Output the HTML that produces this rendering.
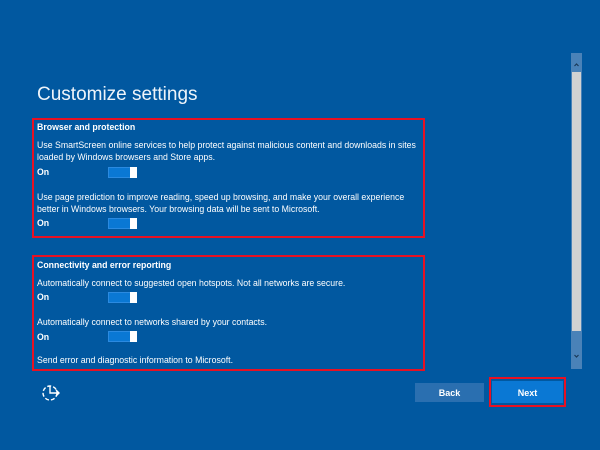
<!DOCTYPE html>
<html><head><style>
body{margin:0;width:600px;height:450px;background:#0158a0;font-family:"Liberation Sans",sans-serif;color:#fff;position:relative;overflow:hidden}
.a{position:absolute;white-space:nowrap;font-size:8.75px;line-height:11px}
.b{font-weight:bold}
.box{position:absolute;border:2px solid #e81123;box-sizing:border-box}
.tg{position:absolute;width:29px;height:11px;background:#0a78d4;border:1px solid #2b8ae0;box-sizing:border-box}
.tg::after{content:"";position:absolute;right:-1px;top:-1px;width:7px;height:11px;background:#fff}
</style></head><body>
<div class="a" style="left:37px;top:83px;font-size:19px;line-height:24px;color:#eef4fa">Customize settings</div>
<div class="box" style="left:32px;top:118px;width:393px;height:120px"></div>
<div class="a b" style="left:37px;top:122px">Browser and protection</div>
<div class="a" style="left:37px;top:140px">Use SmartScreen online services to help protect against malicious content and downloads in sites</div>
<div class="a" style="left:37px;top:152px">loaded by Windows browsers and Store apps.</div>
<div class="a b" style="left:37px;top:167px">On</div><div class="tg" style="left:108px;top:167px"></div>
<div class="a" style="left:37px;top:192px">Use page prediction to improve reading, speed up browsing, and make your overall experience</div>
<div class="a" style="left:37px;top:204px">better in Windows browsers. Your browsing data will be sent to Microsoft.</div>
<div class="a b" style="left:37px;top:218px">On</div><div class="tg" style="left:108px;top:218px"></div>
<div class="box" style="left:32px;top:255px;width:393px;height:116px"></div>
<div class="a b" style="left:37px;top:260px">Connectivity and error reporting</div>
<div class="a" style="left:37px;top:278px">Automatically connect to suggested open hotspots. Not all networks are secure.</div>
<div class="a b" style="left:37px;top:292px">On</div><div class="tg" style="left:108px;top:292px"></div>
<div class="a" style="left:37px;top:317px">Automatically connect to networks shared by your contacts.</div>
<div class="a b" style="left:37px;top:332px">On</div><div class="tg" style="left:108px;top:331px"></div>
<div class="a" style="left:37px;top:355px">Send error and diagnostic information to Microsoft.</div>
<div style="position:absolute;left:571px;top:53px;width:11px;height:316px;background:#4a82b8"></div>
<div style="position:absolute;left:572px;top:72px;width:9px;height:259px;background:#d2d2d2"></div>
<svg style="position:absolute;left:571px;top:53px" width="11" height="316"><path d="M3.5 13L5.5 11 7.5 13M3.5 302L5.5 304 7.5 302" fill="none" stroke="#1a3a5a" stroke-width="1.2"/></svg>
<svg style="position:absolute;left:40px;top:383px" width="22" height="20" viewBox="0 0 22 20"><circle cx="10" cy="10" r="7" fill="none" stroke="#fff" stroke-width="1.4" stroke-dasharray="4 2"/><path d="M10 3v7h9M16 7l3 3-3 3" fill="none" stroke="#fff" stroke-width="1.4"/></svg>
<div style="position:absolute;left:415px;top:383px;width:69px;height:19px;background:#2a6fb0;font-size:9px;font-weight:bold;text-align:center;line-height:20px">Back</div>
<div style="position:absolute;left:489px;top:377px;width:77px;height:30px;border:2px solid #e81123;box-sizing:border-box"></div>
<div style="position:absolute;left:492px;top:381px;width:71px;height:22px;background:#0a78d4;font-size:9px;font-weight:bold;text-align:center;line-height:24px">Next</div>
</body></html>
